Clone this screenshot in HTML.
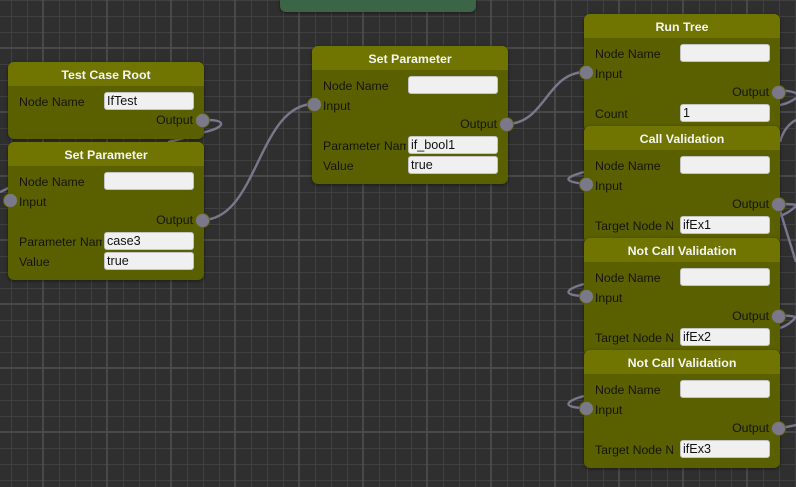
<!DOCTYPE html>
<html><head><meta charset="utf-8"><style>
html,body{margin:0;padding:0}
body{width:796px;height:487px;overflow:hidden;position:relative;background-color:#2f2f2f;font-family:"Liberation Sans",sans-serif}
.bg{position:absolute;left:0;top:0}
.n{position:absolute;width:196px;background:#5a5f00;border-radius:6px;box-shadow:0 1px 3px rgba(0,0,0,.45);overflow:hidden}
.h{position:absolute;left:0;top:0;width:196px;height:24px;background:#6f7500;color:#f4f4f4;font-weight:bold;font-size:12.4px;line-height:27px;text-align:center}
.l{position:absolute;left:11px;color:#15160a;font-size:12.3px;line-height:16px;white-space:nowrap;width:83px;overflow:hidden}
.l.t{width:78px}
.o{position:absolute;right:11px;color:#15160a;font-size:12.3px;line-height:16px}
.i{position:absolute;left:96px;width:86px;height:16px;background:#f0f0f0;border:1px solid #c4c4c4;border-radius:3px;color:#111;font-size:12.6px;line-height:17px;padding-left:2px;white-space:nowrap}
.p{position:absolute;width:13px;height:13px;border-radius:50%;background:#7c788c;border:1px solid #5f6500;box-sizing:content-box}
</style></head><body>
<svg class="bg" width="796" height="487" xmlns="http://www.w3.org/2000/svg">
<g stroke="#404040" stroke-width="1">
<path d="M11.5 0V487M27.5 0V487M59.5 0V487M75.5 0V487M91.5 0V487M123.5 0V487M139.5 0V487M155.5 0V487M187.5 0V487M203.5 0V487M219.5 0V487M251.5 0V487M267.5 0V487M283.5 0V487M315.5 0V487M331.5 0V487M347.5 0V487M379.5 0V487M395.5 0V487M411.5 0V487M443.5 0V487M459.5 0V487M475.5 0V487M507.5 0V487M523.5 0V487M539.5 0V487M571.5 0V487M587.5 0V487M603.5 0V487M635.5 0V487M651.5 0V487M667.5 0V487M699.5 0V487M715.5 0V487M731.5 0V487M763.5 0V487M779.5 0V487M795.5 0V487"/>
<path d="M0 0.5H796M0 16.5H796M0 32.5H796M0 64.5H796M0 80.5H796M0 96.5H796M0 128.5H796M0 144.5H796M0 160.5H796M0 192.5H796M0 208.5H796M0 224.5H796M0 256.5H796M0 272.5H796M0 288.5H796M0 320.5H796M0 336.5H796M0 352.5H796M0 384.5H796M0 400.5H796M0 416.5H796M0 448.5H796M0 464.5H796M0 480.5H796"/>
</g>
<g stroke="#505050" stroke-width="1.5">
<path d="M43 0V487M107 0V487M171 0V487M235 0V487M299 0V487M363 0V487M427 0V487M491 0V487M555 0V487M619 0V487M683 0V487M747 0V487"/>
<path d="M0 48H796M0 112H796M0 176H796M0 240H796M0 304H796M0 368H796M0 432H796"/>
</g>
<g fill="none" stroke="#7b778b" stroke-width="2.4">
<path d="M202 220C258 220 258 104 314 104"/>
<path d="M506 124C546 124 546 72 586 72"/>
<path d="M202 120C228 119 226 127 205 132C190 136 178 140 168 142"/>
<path d="M0 192Q5 190 10 187"/>
<path d="M778 91C788 90 794 92 800 95"/>
<path d="M780 105C786 104 792 101 796 98"/>
<path d="M780 142C783 130 790 123 796 120"/>
<path d="M778 204C786 204 792 204 796 205"/>
<path d="M780 216C786 214 792 210 796 206"/>
<path d="M778 204L796 262"/>
<path d="M778 316C786 315 792 316 796 317"/>
<path d="M780 328C786 326 792 322 796 317"/>
<path d="M586 184C564 182 562 178 584 172"/>
<path d="M586 296C564 296 562 290 584 284"/>
<path d="M586 408C564 408 562 402 584 396"/>
<path d="M778 428C785 428 790 426 796 425"/>
</g>
</svg>

<div class="n" style="left:280px;top:-40px;height:52px;background:#3c6446"></div>

<div class="n" style="left:8px;top:62px;height:77px"><div class="h">Test Case Root</div>
<div class="l" style="top:32px">Node Name</div><div class="i" style="top:30px">IfTest</div>
<div class="o" style="top:50px">Output</div></div>

<div class="n" style="left:8px;top:142px;height:138px"><div class="h">Set Parameter</div>
<div class="l" style="top:32px">Node Name</div><div class="i" style="top:30px"></div>
<div class="l" style="top:52px">Input</div>
<div class="o" style="top:70px">Output</div>
<div class="l" style="top:92px">Parameter Name</div><div class="i" style="top:90px">case3</div>
<div class="l" style="top:112px">Value</div><div class="i" style="top:110px">true</div></div>

<div class="n" style="left:312px;top:46px;height:138px"><div class="h">Set Parameter</div>
<div class="l" style="top:32px">Node Name</div><div class="i" style="top:30px"></div>
<div class="l" style="top:52px">Input</div>
<div class="o" style="top:70px">Output</div>
<div class="l" style="top:92px">Parameter Name</div><div class="i" style="top:90px">if_bool1</div>
<div class="l" style="top:112px">Value</div><div class="i" style="top:110px">true</div></div>

<div class="n" style="left:584px;top:14px;height:118px"><div class="h">Run Tree</div>
<div class="l" style="top:32px">Node Name</div><div class="i" style="top:30px"></div>
<div class="l" style="top:52px">Input</div>
<div class="o" style="top:70px">Output</div>
<div class="l" style="top:92px">Count</div><div class="i" style="top:90px">1</div></div>

<div class="n" style="left:584px;top:126px;height:118px"><div class="h">Call Validation</div>
<div class="l" style="top:32px">Node Name</div><div class="i" style="top:30px"></div>
<div class="l" style="top:52px">Input</div>
<div class="o" style="top:70px">Output</div>
<div class="l t" style="top:92px">Target Node Name</div><div class="i" style="top:90px">ifEx1</div></div>

<div class="n" style="left:584px;top:238px;height:118px"><div class="h">Not Call Validation</div>
<div class="l" style="top:32px">Node Name</div><div class="i" style="top:30px"></div>
<div class="l" style="top:52px">Input</div>
<div class="o" style="top:70px">Output</div>
<div class="l t" style="top:92px">Target Node Name</div><div class="i" style="top:90px">ifEx2</div></div>

<div class="n" style="left:584px;top:350px;height:118px"><div class="h">Not Call Validation</div>
<div class="l" style="top:32px">Node Name</div><div class="i" style="top:30px"></div>
<div class="l" style="top:52px">Input</div>
<div class="o" style="top:70px">Output</div>
<div class="l t" style="top:92px">Target Node Name</div><div class="i" style="top:90px">ifEx3</div></div>

<div class="p" style="left:194.5px;top:112.5px"></div>
<div class="p" style="left:2.5px;top:192.5px"></div>
<div class="p" style="left:194.5px;top:212.5px"></div>
<div class="p" style="left:306.5px;top:96.5px"></div>
<div class="p" style="left:498.5px;top:116.5px"></div>
<div class="p" style="left:578.5px;top:64.5px"></div>
<div class="p" style="left:770.5px;top:84.5px"></div>
<div class="p" style="left:578.5px;top:176.5px"></div>
<div class="p" style="left:770.5px;top:196.5px"></div>
<div class="p" style="left:578.5px;top:288.5px"></div>
<div class="p" style="left:770.5px;top:308.5px"></div>
<div class="p" style="left:578.5px;top:400.5px"></div>
<div class="p" style="left:770.5px;top:420.5px"></div>
</body></html>
